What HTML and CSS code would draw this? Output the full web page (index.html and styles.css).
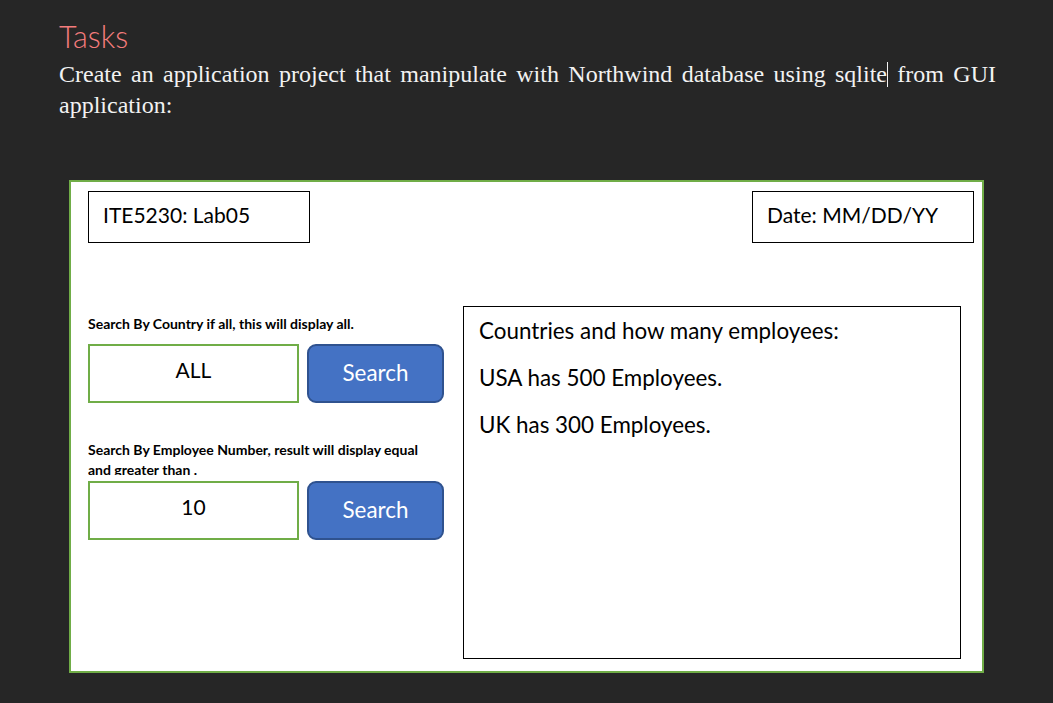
FILE: index.html
```html
<!DOCTYPE html>
<html>
<head>
<meta charset="utf-8">
<link rel="stylesheet" href="styles.css">
</head>
<body>
<div class="doc">
  <h1 class="title">Tasks</h1>
  <p class="intro">Create an application project that manipulate with Northwind database using sqlite<span class="caret"></span> from GUI application:</p>
  <div class="panel">
    <div class="header">
      <div class="hbox">ITE5230: Lab05</div>
      <div class="hbox">Date: MM/DD/YY</div>
    </div>
    <div class="main">
      <div class="left">
        <div class="label">Search By Country if all, this will display all.</div>
        <div class="row">
          <div class="input">ALL</div>
          <div class="btn">Search</div>
        </div>
        <div class="label label2">Search By Employee Number, result will display equal and greater <span class="squiggle">than .</span></div>
        <div class="row">
          <div class="input">10</div>
          <div class="btn">Search</div>
        </div>
      </div>
      <div class="result">
        <p>Countries and how many employees:</p>
        <p>USA has 500 Employees.</p>
        <p>UK has 300 Employees.</p>
      </div>
    </div>
  </div>
</div>
</body>
</html>
```

FILE: styles.css
```css
html, body {
  margin: 0;
  padding: 0;
  background: #262626;
}
.doc {
  width: 937px;
  margin-left: 59px;
  padding-top: 18px;
}
.title {
  margin: 0;
  font-family: "Lato", "Open Sans", sans-serif;
  font-weight: 300;
  font-size: 30.5px;
  line-height: 36px;
  color: #f47c7c;
}
.intro {
  margin: 5px 0 0;
  font-family: "Liberation Serif", serif;
  font-size: 24px;
  line-height: 31px;
  color: #f2f2f2;
  text-align: justify;
}
.caret {
  display: inline-block;
  width: 0;
  height: 25px;
  border-left: 1px solid #f2f2f2;
  vertical-align: -5px;
}
.panel {
  margin: 59px 0 0 10px;
  width: 911px;
  height: 489px;
  border: 2px solid #70ad47;
  background: #fff;
  font-family: "Lato", "Open Sans", sans-serif;
  color: #000;
}
.header {
  display: flex;
  justify-content: space-between;
  padding: 9px 8px 0 17px;
}
.hbox {
  width: 222px;
  height: 52px;
  border: 1px solid #000;
  box-sizing: border-box;
  padding: 9px 0 0 14px;
  font-size: 21px;
  line-height: 28px;
}
.main {
  display: flex;
  gap: 18px;
  padding: 63px 0 0 17px;
}
.left {
  width: 357px;
  padding-top: 8px;
}
.label {
  font-size: 14px;
  font-weight: 700;
  line-height: 20px;
  margin-bottom: 10px;
}
.label2 {
  width: 340px;
  margin-top: 37px;
  height: 35px;
  overflow: hidden;
  margin-bottom: 6px;
}
.squiggle {
  text-decoration: underline;
  text-decoration-color: #4472c4;
}
.row {
  display: flex;
  gap: 8px;
}
.input {
  width: 211px;
  height: 59px;
  box-sizing: border-box;
  border: 2px solid #70ad47;
  text-align: center;
  font-size: 21px;
  line-height: 28px;
  padding-top: 10px;
}
.btn {
  width: 137px;
  height: 59px;
  box-sizing: border-box;
  border: 2px solid #2f528f;
  border-radius: 9px;
  background: #4472c4;
  color: #fff;
  text-align: center;
  font-size: 22.4px;
  line-height: 28px;
  padding-top: 13px;
}
.result {
  width: 498px;
  height: 353px;
  box-sizing: border-box;
  border: 1.5px solid #000;
  padding: 10px 0 0 15px;
}
.result p {
  margin: 0 0 19px;
  font-size: 22.4px;
  line-height: 28px;
}
```
